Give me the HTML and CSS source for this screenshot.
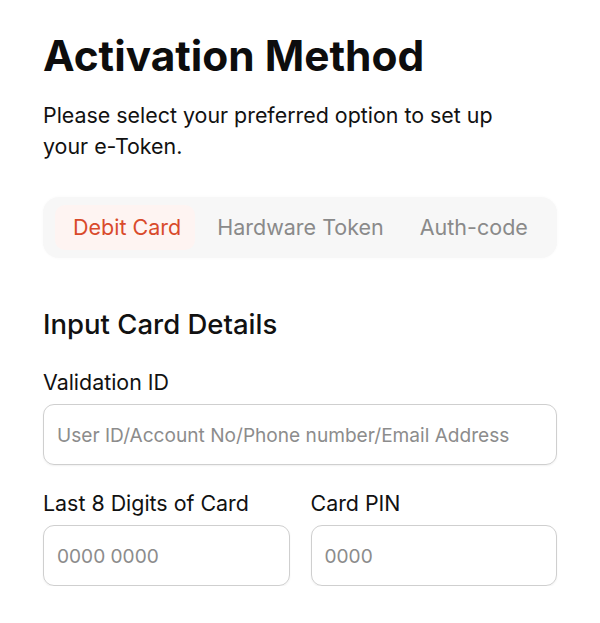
FILE: index.html
```html
<!DOCTYPE html>
<html lang="en">
<head>
<meta charset="utf-8">
<title>Activation Method</title>
<link rel="stylesheet" href="styles.css">
</head>
<body>
<main class="page">
  <h1 class="title">Activation Method</h1>
  <p class="subtitle">Please select your preferred option to set up your e-Token.</p>
  <div class="tabs">
    <button class="tab tab-active">Debit Card</button>
    <button class="tab">Hardware Token</button>
    <button class="tab">Auth-code</button>
  </div>
  <h2 class="section">Input Card Details</h2>
  <div class="field">
    <label class="label">Validation ID</label>
    <div class="input"><span class="placeholder">User ID/Account No/Phone number/Email Address</span></div>
  </div>
  <div class="row">
    <div class="field">
      <label class="label">Last 8 Digits of Card</label>
      <div class="input"><span class="placeholder">0000 0000</span></div>
    </div>
    <div class="field">
      <label class="label">Card PIN</label>
      <div class="input"><span class="placeholder">0000</span></div>
    </div>
  </div>
</main>
</body>
</html>
```
FILE: styles.css
```css
* { box-sizing: border-box; }
html, body { margin: 0; padding: 0; background: #fff; }
body { font-family: "Inter", "Noto Sans", sans-serif; color: #111; }
.page { padding: 26px 43px 0 43px; width: 600px; }
.title { margin: 0; font-size: 42.4px; font-weight: 700; line-height: 60px; color: #0d0d0d; }
.subtitle { margin: 14px 0 0 0; font-size: 21.4px; line-height: 31px; width: 480px; color: #111; }
.tabs { margin-top: 35px; height: 61px; background: #f7f7f7; border-radius: 16px; display: flex; align-items: center; padding: 0 0 0 12px; box-shadow: 0 0 3px rgba(0,0,0,0.03); overflow: hidden; }
.tab { flex: none; white-space: nowrap; border: 0; background: transparent; font-family: inherit; font-size: 21.5px; color: #8a8a8a; padding: 0 18px; height: 45px; border-radius: 10px; line-height: 45px; }
.tab-active { color: #d94a2b; background: #fef4f2; padding-right: 14px; }
.tab-active + .tab { padding-left: 22px; }
.section { margin: 49px 0 0 0; font-size: 27.5px; font-weight: 500; line-height: 34px; }
.field { display: flex; flex-direction: column; margin-top: 28px; }
.label { font-size: 21.4px; line-height: 26px; margin-bottom: 9px; }
.input { height: 61px; border: 1.5px solid #cfcfcf; border-radius: 11px; display: flex; align-items: center; padding: 0 13px; box-shadow: 0 1px 2px rgba(0,0,0,0.06); }
.placeholder { font-size: 19.1px; color: #8c8c8c; }
.row { display: grid; grid-template-columns: 1fr 1fr; gap: 21px; margin-top: -3px; }
```
